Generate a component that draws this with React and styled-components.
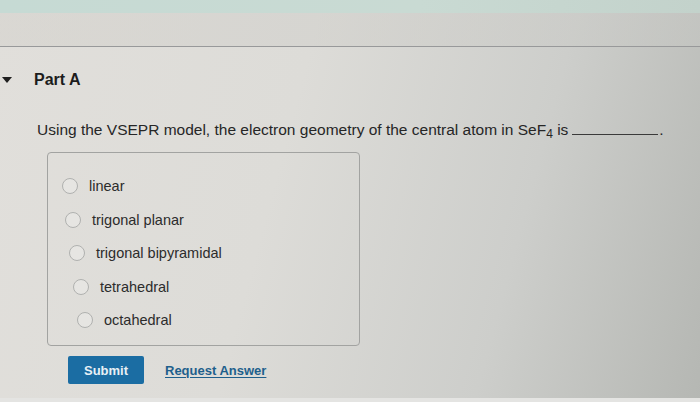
import React from "react";
import styled, { createGlobalStyle } from "styled-components";

const GlobalStyle = createGlobalStyle`
  html, body {
    margin: 0;
    padding: 0;
  }
  body {
    width: 700px;
    height: 402px;
    overflow: hidden;
    font-family: "Liberation Sans", Arial, sans-serif;
    background: linear-gradient(105deg, #e1dfdb 0%, #dddcd8 40%, #cdcecb 72%, #b5b7b3 100%);
  }
`;

const Page = styled.div`
  height: 402px;
  display: flex;
  flex-direction: column;
`;

const TopBand = styled.div`
  height: 13px;
  background: linear-gradient(90deg, #c6dad4, #c9dad3 60%, #c3d2cb);
`;

const Header = styled.div`
  height: 33px;
  border-bottom: 1px solid #98999a;
  background: linear-gradient(90deg, rgba(210, 208, 203, 0.5), rgba(200, 201, 197, 0.4));
`;

const Section = styled.div`
  flex: 1;
  display: flex;
  flex-direction: column;
  padding: 24px 0 0 0;
`;

const PartRow = styled.div`
  display: flex;
  align-items: center;
  gap: 22px;
  padding-left: 2px;
  height: 18px;
`;

const Caret = styled.span`
  width: 0;
  height: 0;
  border-left: 5px solid transparent;
  border-right: 5px solid transparent;
  border-top: 6px solid #1f1f1f;
`;

const PartTitle = styled.h2`
  margin: 0;
  font-size: 16px;
  font-weight: 700;
  color: #1c1c1c;
`;

const Question = styled.p`
  margin: 32px 0 0 37px;
  font-size: 15.5px;
  color: #262626;
  line-height: 18px;
  white-space: nowrap;

  sub {
    font-size: 12px;
    vertical-align: -3px;
    line-height: 0;
  }
`;

const Blank = styled.span`
  display: inline-block;
  width: 86px;
  border-bottom: 1px solid #3a3a3a;
  margin-left: 4px;
  margin-right: 1px;
`;

const Choices = styled.div`
  margin: 13px 0 0 47px;
  width: 313px;
  height: 194px;
  box-sizing: border-box;
  border: 1px solid #a2a3a1;
  border-radius: 4px;
  padding: 24px 0 0 14px;
  display: flex;
  flex-direction: column;
  gap: 15.5px;
`;

const Choice = styled.label`
  display: flex;
  align-items: center;
  gap: 11px;
  height: 18px;
  padding-left: ${(p) => p.$indent}px;
  font-size: 14.5px;
  color: #2c2c2c;
`;

const Radio = styled.span`
  width: 16px;
  height: 16px;
  box-sizing: border-box;
  border-radius: 50%;
  border: 1.5px solid #b0b1af;
  background: #e6e5e2;
`;

const Actions = styled.div`
  margin: 10px 0 0 68px;
  display: flex;
  align-items: center;
  gap: 21px;
`;

const SubmitButton = styled.button`
  width: 76px;
  height: 28px;
  border: none;
  border-radius: 2px;
  background: #1b6da3;
  color: #e8f0f5;
  font-family: "Liberation Sans", Arial, sans-serif;
  font-size: 13px;
  font-weight: 700;
  padding: 0;
`;

const RequestLink = styled.a`
  font-size: 13px;
  font-weight: 700;
  color: #1e5f8c;
  text-decoration: underline;
  text-underline-offset: 2px;
`;

const BottomStrip = styled.div`
  height: 4px;
  background: #e4e4e2;
`;

const options = [
  { label: "linear", indent: 0 },
  { label: "trigonal planar", indent: 3 },
  { label: "trigonal bipyramidal", indent: 7 },
  { label: "tetrahedral", indent: 11 },
  { label: "octahedral", indent: 15 },
];

export default function App() {
  return (
    <>
      <GlobalStyle />
      <Page>
        <TopBand />
        <Header />
        <Section>
          <PartRow>
            <Caret />
            <PartTitle>Part A</PartTitle>
          </PartRow>
          <Question>
            Using the VSEPR model, the electron geometry of the central atom in SeF
            <sub>4</sub> is
            <Blank />.
          </Question>
          <Choices>
            {options.map((o) => (
              <Choice key={o.label} $indent={o.indent}>
                <Radio />
                {o.label}
              </Choice>
            ))}
          </Choices>
          <Actions>
            <SubmitButton>Submit</SubmitButton>
            <RequestLink>Request Answer</RequestLink>
          </Actions>
        </Section>
        <BottomStrip />
      </Page>
    </>
  );
}
